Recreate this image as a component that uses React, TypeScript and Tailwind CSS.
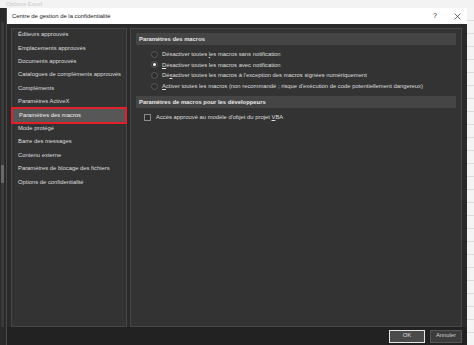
import React from 'react';

const font = { fontFamily: '"Liberation Sans", "Noto Sans", sans-serif' };

const navItems = [
  'Éditeurs approuvés',
  'Emplacements approuvés',
  'Documents approuvés',
  'Catalogues de compléments approuvés',
  'Compléments',
  'Paramètres ActiveX',
  'Paramètres des macros',
  'Mode protégé',
  'Barre des messages',
  'Contenu externe',
  'Paramètres de blocage des fichiers',
  'Options de confidentialité',
];

const Radio: React.FC<{ checked?: boolean; children: React.ReactNode }> = ({ checked, children }) => (
  <div className="flex items-center h-[10.6px]">
    <span className="w-[7px] h-[7px] rounded-full border border-[#5a5a5a] bg-[#2e2e2e] flex items-center justify-center mr-[4px]">
      {checked && <span className="w-[3px] h-[3px] rounded-full bg-white" />}
    </span>
    <span className="whitespace-nowrap">{children}</span>
  </div>
);

const SectionHeader: React.FC<{ children: React.ReactNode }> = ({ children }) => (
  <div className="h-[12px] bg-[#454545] flex items-center pl-[3px] font-bold text-[#e8e8e8]">{children}</div>
);

export default function App() {
  return (
    <div className="relative w-[474px] h-[345px] overflow-hidden bg-[#2a2a2a] text-[5.85px]" style={font}>
      {/* underlying window */}
      <div className="absolute left-0 top-0 w-full h-[8px] bg-[#f3f3f3] text-[#c8c8c8] pl-[6px] leading-[8px]">Options Excel</div>
      <div className="absolute left-[1px] top-[22px] w-[3px] h-[305px] bg-[#3a3a3a]">
        <div className="mt-[143px] h-[18px] bg-[#6a6a6a]" />
      </div>
      <div className="absolute right-0 top-[8px] w-[7px] h-[337px] bg-[#f4f4f4] flex flex-col">
        {Array.from({ length: 26 }).map((_, i) => (
          <div key={i} className="h-[13px] border-b border-[#dcdcdc] shrink-0" />
        ))}
      </div>

      {/* dialog */}
      <div className="absolute left-[6px] top-[8px] w-[461px] h-[340px] flex flex-col bg-[#2a2a2a] border-l border-[#4a4a4a]">
        <div className="h-[16px] bg-white flex items-center px-[5px] text-[#1a1a1a] text-[5.9px] shrink-0">
          <span className="flex-1">Centre de gestion de la confidentialité</span>
          <span className="mr-[17px] text-[7px]">?</span>
          <svg width="7" height="7" viewBox="0 0 10 10" className="mr-[1px]">
            <path d="M1 1 L9 9 M9 1 L1 9" stroke="#222" strokeWidth="1" />
          </svg>
        </div>

        <div className="flex flex-1 gap-[3px] pl-[4px] pr-[5px] pt-[4px] min-h-0">
          <div className="w-[116px] h-[299px] bg-[#333333] border border-[#474747] text-[#dedede]">
            <div className="-mt-[1px]">
              {navItems.map((item) =>
                item === 'Paramètres des macros' ? (
                  <div key={item} className="h-[17px] -mx-[1px] my-[-1.8px] border-2 border-[#e0202a] bg-[#575757] flex items-center pl-[6px] text-[#f0f0f0]">
                    {item}
                  </div>
                ) : (
                  <div key={item} className="h-[13.4px] flex items-center pl-[6px] whitespace-nowrap">
                    {item}
                  </div>
                )
              )}
            </div>
          </div>

          <div className="flex-1 h-[299px] bg-[#333333] border border-[#474747] px-[5px] pt-[4px] text-[#dedede]">
            <SectionHeader>Paramètres des macros</SectionHeader>
            <div className="pl-[15px] pt-[4px] pb-[5px]">
              <Radio>Désactiver toutes <u>l</u>es macros sans notification</Radio>
              <Radio checked><u>D</u>ésactiver toutes les macros avec notification</Radio>
              <Radio>Dé<u>s</u>activer toutes les macros à l'exception des macros signées numériquement</Radio>
              <Radio><u>A</u>ctiver toutes les macros (non recommandé ; risque d'exécution de code potentiellement dangereux)</Radio>
            </div>
            <SectionHeader>Paramètres de macros pour les développeurs</SectionHeader>
            <div className="flex items-center pl-[8px] pt-[5px]">
              <span className="w-[7px] h-[7px] border border-[#8a8a8a] bg-[#2e2e2e] mr-[5px]" />
              <span>Accès approuvé au modèle d'objet du projet <u>V</u>BA</span>
            </div>
          </div>
        </div>

        <div className="h-[18px] bg-[#222222] flex items-center justify-end gap-[5px] pr-[5px] shrink-0 mb-[3px]">
          <button className="w-[36px] h-[13px] bg-[#4a4a4a] border border-[#e6e6e6] text-[#dcdcdc] leading-none">OK</button>
          <button className="w-[32px] h-[13px] bg-[#3c3c3c] border border-[#555] text-[#cfcfcf] leading-none">Annuler</button>
        </div>
      </div>
    </div>
  );
}
